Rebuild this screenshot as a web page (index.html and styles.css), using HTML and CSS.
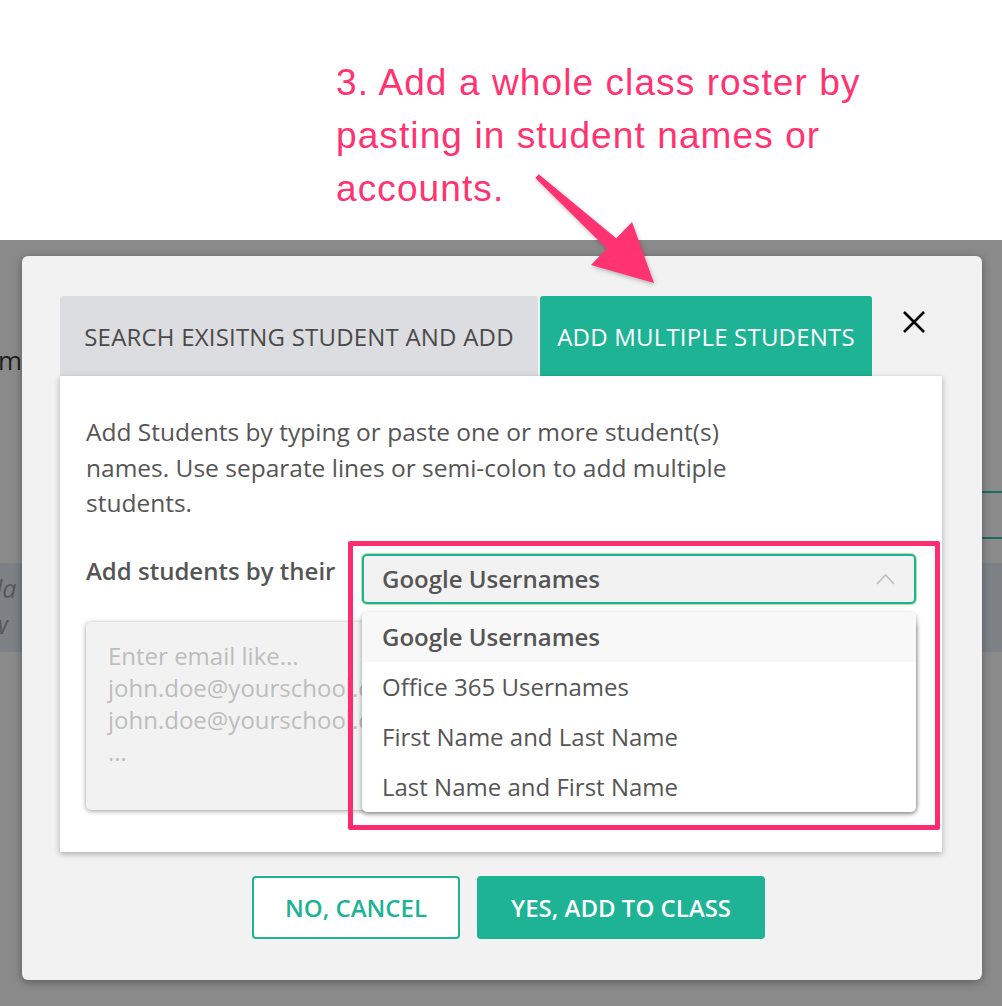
FILE: index.html
```html
<!DOCTYPE html>
<html lang="en">
<head>
<meta charset="utf-8">
<title>Add multiple students</title>
<link rel="stylesheet" href="styles.css">
</head>
<body>
<div class="page">
  <header class="note">
    <p class="note-text">3. Add a whole class roster by pasting in student names or accounts.</p>
  </header>

  <main class="stage">
    <div class="behind">
      <span class="behind-m">m</span>
      <div class="behind-band left"><span class="it1">la</span><span class="it2">w</span></div>
      <div class="behind-line l1"></div>
      <div class="behind-line l2"></div>
      <div class="behind-band right"></div>
    </div>

    <section class="modal">
      <div class="tabs">
        <div class="tab">SEARCH EXISITNG STUDENT AND ADD</div>
        <div class="tab active">ADD MULTIPLE STUDENTS</div>
        <button class="close" aria-label="Close">
          <svg viewBox="0 0 24 24" width="24" height="24"><path d="M2 2 L22 22 M22 2 L2 22" stroke="#000" stroke-width="2.6" stroke-linecap="butt" fill="none"/></svg>
        </button>
      </div>

      <div class="panel">
        <p class="intro">Add Students by typing or paste one or more student(s) names. Use separate lines or semi-colon to add multiple students.</p>

        <div class="field-row">
          <label class="field-label">Add students by their</label>
          <div class="select-wrap">
            <div class="select">
              <span>Google Usernames</span>
              <svg class="chev" viewBox="0 0 20 13" width="20" height="13"><path d="M2 12 L10.5 3 L19 12" stroke="#bdbdbd" stroke-width="1.6" fill="none"/></svg>
            </div>
            <ul class="menu">
              <li class="item selected">Google Usernames</li>
              <li class="item">Office 365 Usernames</li>
              <li class="item">First Name and Last Name</li>
              <li class="item">Last Name and First Name</li>
            </ul>
          </div>
        </div>

        <div class="textarea">
          <span>Enter email like...</span>
          <span>john.doe@yourschool.com</span>
          <span>john.doe@yourschool.com</span>
          <span>...</span>
        </div>

        <div class="callout"></div>
      </div>

      <div class="actions">
        <button class="btn outline">NO, CANCEL</button>
        <button class="btn solid">YES, ADD TO CLASS</button>
      </div>
    </section>
  </main>

  <svg class="arrow" viewBox="0 0 1002 1006" width="1002" height="1006">
    <polygon points="538.7,174.2 616.2,238.3 632,222 654,283 591,265 606.8,248.7 535.3,177.9" fill="#ff3371"/>
  </svg>
</div>
</body>
</html>
```

FILE: styles.css
```css
* { box-sizing: border-box; }

html, body {
  margin: 0;
  padding: 0;
  width: 1002px;
  height: 1006px;
  overflow: hidden;
  background: #fff;
}

.page {
  position: relative;
  width: 1002px;
  height: 1006px;
  font-family: "Open Sans", "Noto Sans", sans-serif;
}

/* annotation */
.note {
  height: 240px;
  background: #fff;
  padding: 56px 0 0 336px;
}
.note-text {
  margin: 0;
  width: 600px;
  font-family: "Liberation Sans", Arial, sans-serif;
  font-size: 37px;
  letter-spacing: 1.1px;
  line-height: 53px;
  color: #ff3371;
}

.arrow {
  position: absolute;
  left: 0;
  top: 0;
  pointer-events: none;
  filter: drop-shadow(1px 2px 2px rgba(0,0,0,0.25));
}

/* dimmed stage */
.stage {
  position: relative;
  height: 766px;
  background: #8a8a8a;
  padding: 16px 20px 0 22px;
}

.behind { position: absolute; inset: 0; }
.behind-m {
  position: absolute;
  left: -2px;
  top: 102px;
  font-size: 26px;
  color: #1e1e1e;
}
.behind-band {
  position: absolute;
  top: 323px;
  height: 89px;
  background: #7d8185;
}
.behind-band.left { left: 0; width: 30px; }
.behind-band.right { right: 0; width: 30px; }
.it1, .it2 {
  position: absolute;
  left: -4px;
  font-style: italic;
  font-size: 25px;
  color: #55585c;
}
.it1 { top: 8px; }
.it2 { top: 44px; left: -10px; }
.behind-line {
  position: absolute;
  right: 0;
  width: 30px;
  height: 2px;
  background: #1c6b5b;
}
.behind-line.l1 { top: 251px; }
.behind-line.l2 { top: 297px; }

/* modal */
.modal {
  position: relative;
  width: 960px;
  height: 724px;
  background: #f2f2f2;
  border-radius: 6px;
  box-shadow: 0 2px 8px rgba(0,0,0,0.35);
  padding: 40px 40px 40px 38px;
  display: flex;
  flex-direction: column;
}

.tabs {
  display: flex;
  gap: 2px;
  height: 80px;
}
.tab {
  display: flex;
  align-items: center;
  justify-content: center;
  height: 80px;
  font-size: 24px;
  letter-spacing: 0.2px;
  color: #4a4a4a;
  background: #dcdde0;
  border-radius: 3px 3px 0 0;
  width: 478px;
}
.tab.active {
  width: 332px;
  background: #1db394;
  color: #fff;
}
.close {
  margin: 14px 0 0 28px;
  padding: 0;
  width: 24px;
  height: 24px;
  border: 0;
  background: none;
  align-self: flex-start;
}
.close svg { display: block; }

.panel {
  position: relative;
  background: #fff;
  box-shadow: 0 2px 6px rgba(0,0,0,0.3);
  padding: 38px 26px 42px;
}

.intro {
  margin: 0 0 33px;
  width: 690px;
  font-size: 24.5px;
  line-height: 35.5px;
  color: #555;
}

.field-row {
  display: flex;
  align-items: flex-start;
}
.field-label {
  width: 276px;
  flex: none;
  margin-top: 2px;
  font-size: 24px;
  line-height: 30px;
  font-weight: 600;
  color: #555;
}
.select-wrap {
  position: relative;
  width: 556px;
  z-index: 2;
}
.select {
  display: flex;
  align-items: center;
  justify-content: space-between;
  height: 50px;
  padding: 0 19px 0 18px;
  background: #f2f2f2;
  border: 2px solid #1db394;
  border-radius: 5px;
  box-shadow: 0 0 0 1px #b5e0a8;
  font-size: 24px;
  font-weight: 600;
  color: #555;
}
.chev { display: block; }

.menu {
  position: absolute;
  left: 0;
  top: 58px;
  width: 554px;
  margin: 0;
  padding: 0;
  list-style: none;
  background: #fff;
  border-radius: 5px;
  box-shadow: 0 2px 5px rgba(0,0,0,0.4);
  overflow: hidden;
}
.item {
  height: 50px;
  display: flex;
  align-items: center;
  padding-left: 20px;
  font-size: 24px;
  color: #555;
}
.item.selected {
  background: #f8f8f8;
  font-weight: 600;
}

.textarea {
  margin-top: 18px;
  height: 188px;
  background: #f2f2f2;
  border-radius: 5px;
  box-shadow: 0 1px 5px rgba(0,0,0,0.4);
  padding: 18px 22px;
  display: flex;
  flex-direction: column;
  font-size: 24px;
  line-height: 32px;
  color: #bdbdbd;
  overflow: hidden;
  white-space: nowrap;
}

.callout {
  position: absolute;
  left: 288px;
  top: 165px;
  width: 592px;
  height: 289px;
  border: 5px solid #ff2d6f;
  border-radius: 2px;
  z-index: 3;
  pointer-events: none;
}

.actions {
  display: flex;
  justify-content: center;
  gap: 17px;
  margin-top: 24px;
  padding-left: 15px;
}
.btn {
  height: 63px;
  border-radius: 4px;
  font-family: "Open Sans", "Noto Sans", sans-serif;
  font-size: 24px;
  font-weight: 600;
  cursor: pointer;
}
.btn.outline {
  width: 208px;
  background: #fff;
  border: 2px solid #1db394;
  color: #1db394;
}
.btn.solid {
  width: 288px;
  background: #1db394;
  border: 0;
  color: #fff;
}
```
